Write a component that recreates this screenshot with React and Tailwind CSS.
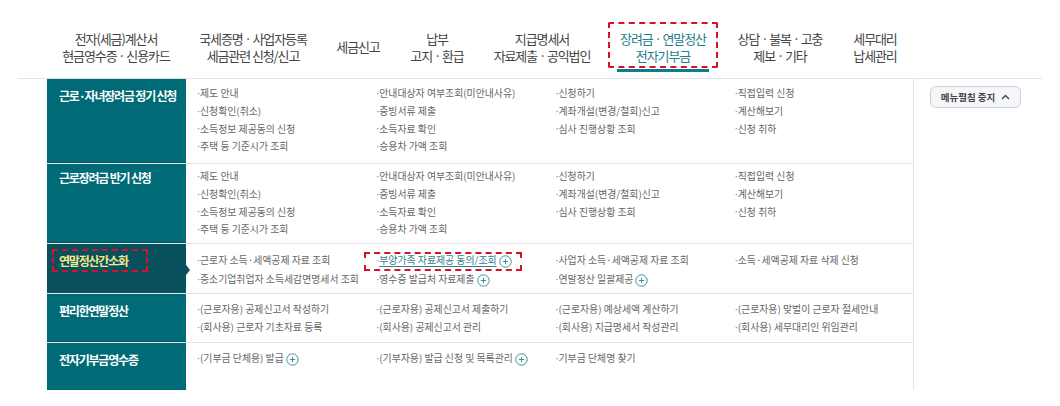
const NAV = [
  { lines: ['전자(세금)계산서', '현금영수증 · 신용카드'], cls: 'w-[138px]' },
  { lines: ['국세증명 · 사업자등록', '세금관련 신청/신고'], cls: 'w-[136px]' },
  { lines: ['세금신고'], cls: 'w-[74px]' },
  { lines: ['납부', '고지 · 환급'], cls: 'w-[84px]' },
  { lines: ['지급명세서', '자료제출 · 공익법인'], cls: 'w-[126px]' },
  { lines: ['장려금 · 연말정산', '전자기부금'], cls: 'w-[92px] ml-[12px]', active: true },
  { lines: ['상담 · 불복 · 고충', '제보 · 기타'], cls: 'w-[94px] ml-[24px]' },
  { lines: ['세무대리', '납세관리'], cls: 'w-[96px]' },
];

const CHILD = [
  ['제도 안내', '신청확인(취소)', '소득정보 제공동의 신청', '주택 등 기준시가 조회'],
  ['안내대상자 여부조회(미안내사유)', '증빙서류 제출', '소득자료 확인', '승용차 가액 조회'],
  ['신청하기', '계좌개설(변경/철회)신고', '심사 진행상황 조회'],
  ['직접입력 신청', '계산해보기', '신청 취하'],
];

const ROWS = [
  { title: '근로·자녀장려금 정기 신청', cls: 'h-[85px]', titlePt: 'pt-[8px]', listPt: 'pt-[6px]', cols: CHILD },
  { title: '근로장려금 반기 신청', cls: 'h-[80px]', titlePt: 'pt-[5px]', listPt: 'pt-[4px]', cols: CHILD },
  {
    title: '연말정산간소화',
    cls: 'h-[50px]',
    titlePt: 'pt-[8px]',
    listPt: 'pt-[7px]',
    active: true,
    cols: [
      ['근로자 소득·세액공제 자료 조회', '중소기업취업자 소득세감면명세서 조회'],
      [{ text: '부양가족 자료제공 동의/조회', plus: true, link: true }, { text: '영수증 발급처 자료제출', plus: true }],
      ['사업자 소득·세액공제 자료 조회', { text: '연말정산 일괄제공', plus: true }],
      ['소득·세액공제 자료 삭제 신청'],
    ],
  },
  {
    title: '편리한연말정산',
    cls: 'h-[49px]',
    titlePt: 'pt-[8px]',
    listPt: 'pt-[7px]',
    cols: [
      ['(근로자용) 공제신고서 작성하기', '(회사용) 근로자 기초자료 등록'],
      ['(근로자용) 공제신고서 제출하기', '(회사용) 공제신고서 관리'],
      ['(근로자용) 예상세액 계산하기', '(회사용) 지급명세서 작성관리'],
      ['(근로자용) 맞벌이 근로자 절세안내', '(회사용) 세무대리인 위임관리'],
    ],
  },
  {
    title: '전자기부금영수증',
    cls: 'h-[47px]',
    titlePt: 'pt-[8px]',
    listPt: 'pt-[7px]',
    last: true,
    cols: [
      [{ text: '(기부금 단체용) 발급', plus: true }],
      [{ text: '(기부자용) 발급 신청 및 목록관리', plus: true }],
      ['기부금 단체명 찾기'],
      [],
    ],
  },
];

function PlusIcon() {
  return (
    <svg width="13" height="13" viewBox="0 0 13 13" fill="none" className="ml-[2px] mt-[2px] shrink-0">
      <circle cx="6.5" cy="6.5" r="5.7" stroke="#3f8f9a" />
      <path d="M6.5 3.8v5.4M3.8 6.5h5.4" stroke="#3f8f9a" />
    </svg>
  );
}

function Item({ item, tall }) {
  const data = typeof item === 'string' ? { text: item } : item;
  return (
    <li className={`flex items-center whitespace-nowrap ${tall ? 'h-[19px]' : 'h-[17.7px]'}`}>
      <span className="w-[4px] text-[9px] text-[#777]">·</span>
      <span className={data.link ? 'text-[#2f7f8c] underline underline-offset-2' : ''}>{data.text}</span>
      {data.plus && <PlusIcon />}
    </li>
  );
}

function Row({ row }) {
  return (
    <div className={`flex ${row.cls} ${row.last ? '' : 'border-b border-[#e2e4e6]'}`}>
      <div
        className={`relative w-[139px] shrink-0 pl-[12px] text-[12px] font-bold leading-[18px] tracking-[-1.2px] ${row.titlePt} ${
          row.active ? 'bg-[#07505c] text-[#f4e98a]' : 'bg-[#006b76] text-white'
        } ${row.last ? '' : 'border-b border-[#055a65]'}`}
      >
        {row.title}
        {row.active && (
          <>
            <span className="absolute left-[5px] top-[5px] h-[23px] w-[96px] border-2 border-dashed border-[#d8102a]" />
            <span className="absolute left-full top-[21px] border-y-[5px] border-l-[4px] border-y-transparent border-l-[#07505c]" />
          </>
        )}
      </div>
      <div className={`grid flex-1 grid-cols-4 pl-[10px] text-[9.9px] text-[#666] ${row.listPt}`}>
        {row.cols.map((col, i) => (
          <ul key={i} className="relative">
            {col.map((item, j) => (
              <Item key={j} item={item} tall={row.active} />
            ))}
            {row.active && i === 1 && (
              <span className="absolute left-[-11px] top-[1px] h-[19px] w-[158px] border-2 border-dashed border-[#d8102a]" />
            )}
          </ul>
        ))}
      </div>
    </div>
  );
}

export default function App() {
  return (
    <div className="h-[406px] w-[1060px] bg-white font-['Noto_Sans_CJK_KR','Noto_Sans',sans-serif]">
      {/* 상단 메뉴 */}
      <nav className="flex h-[78px] pl-[47px] pt-[28px] text-[13px] leading-[17.5px] tracking-[-1.1px] text-[#444]">
        {NAV.map((m) => (
          <div
            key={m.lines[0]}
            className={`relative flex h-[38px] shrink-0 flex-col items-center justify-center whitespace-nowrap ${m.cls} ${
              m.active ? 'text-[#1f7f8c]' : ''
            }`}
          >
            {m.lines.map((line) => (
              <span key={line}>{line}</span>
            ))}
            {m.active && (
              <>
                <span className="absolute inset-x-0 bottom-[-6px] h-[3px] bg-[#0f7c8a]" />
                <span className="absolute left-[-9px] top-[-6px] h-[46px] w-[110px] rounded-[2px] border-2 border-dashed border-[#d8102a]" />
              </>
            )}
          </div>
        ))}
      </nav>

      {/* 하위 메뉴 */}
      <div className="ml-[18px] flex w-[1024px] border-t border-[#e2e4e6] pl-[29px]">
        <div className="w-[866px] shrink-0">
          {ROWS.map((row) => (
            <Row key={row.title} row={row} />
          ))}
        </div>
        <div className="flex-1 border-l border-[#e2e4e6] pl-[16px] pt-[7px]">
          <button className="flex h-[22px] w-[91px] items-center justify-center gap-[6px] rounded-[6px] border border-[#c9d0d8] bg-[#f4f6f9] text-[9.5px] font-bold text-[#444]">
            메뉴펼침 중지
            <svg width="9" height="6" viewBox="0 0 9 6" fill="none">
              <path d="M1 5l3.5-3.5L8 5" stroke="#444" strokeWidth="1.4" />
            </svg>
          </button>
        </div>
      </div>
    </div>
  );
}
